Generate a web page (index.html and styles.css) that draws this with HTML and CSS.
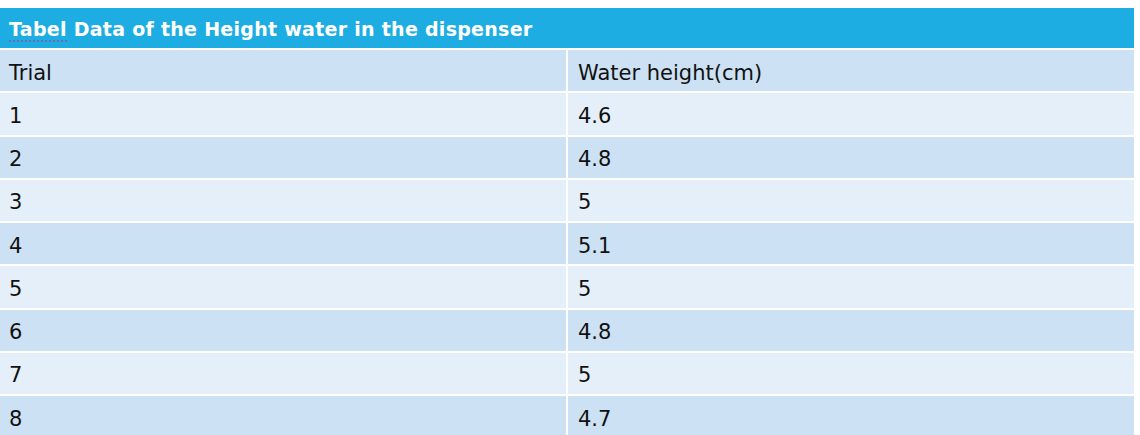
FILE: index.html
```html
<!DOCTYPE html>
<html>
<head>
<meta charset="utf-8">
<link rel="stylesheet" href="styles.css">
</head>
<body>
<table class="data">
  <colgroup><col class="col1"><col class="col2"></colgroup>
  <thead>
    <tr class="title-row"><th colspan="2"><span class="spell">Tabel</span> Data of the Height water in the dispenser</th></tr>
  </thead>
  <tbody>
    <tr class="dark"><td class="c1">Trial</td><td class="c2">Water height(cm)</td></tr>
    <tr class="light"><td class="c1">1</td><td class="c2">4.6</td></tr>
    <tr class="dark"><td class="c1">2</td><td class="c2">4.8</td></tr>
    <tr class="light"><td class="c1">3</td><td class="c2">5</td></tr>
    <tr class="dark"><td class="c1">4</td><td class="c2">5.1</td></tr>
    <tr class="light"><td class="c1">5</td><td class="c2">5</td></tr>
    <tr class="dark"><td class="c1">6</td><td class="c2">4.8</td></tr>
    <tr class="light"><td class="c1">7</td><td class="c2">5</td></tr>
    <tr class="dark"><td class="c1">8</td><td class="c2">4.7</td></tr>
  </tbody>
</table>
</body>
</html>
```

FILE: styles.css
```css
html, body {
  margin: 0;
  padding: 0;
  background: #ffffff;
  overflow: hidden;
}
body {
  padding-top: 8px;
  font-family: "DejaVu Sans", "Liberation Sans", sans-serif;
}
.data {
  width: 1134px;
  border-collapse: separate;
  border-spacing: 0;
  table-layout: fixed;
}
.col1 {
  width: 568px;
}
.col2 {
  width: 566px;
}
.title-row th {
  height: 36px;
  background: #1eade3;
  color: #ffffff;
  text-align: left;
  font-weight: bold;
  font-size: 19px;
  padding: 4px 0 0 9px;
  border-bottom: 2px solid #ffffff;
  letter-spacing: 0.28px;
  vertical-align: middle;
}
.spell {
  display: inline-block;
  line-height: 1.1;
  border-bottom: 2px dotted #6a6db0;
}
td {
  height: 37.25px;
  padding: 4px 0 0 0;
  font-size: 21px;
  color: #111111;
  border-bottom: 2px solid #ffffff;
  vertical-align: middle;
}
tr:last-child td {
  border-bottom: none;
}
td.c1 {
  padding-left: 9px;
  border-right: 2px solid #ffffff;
}
td.c2 {
  padding-left: 10px;
}
.dark td {
  background: #cce1f3;
}
.light td {
  background: #e4eff9;
}
```
